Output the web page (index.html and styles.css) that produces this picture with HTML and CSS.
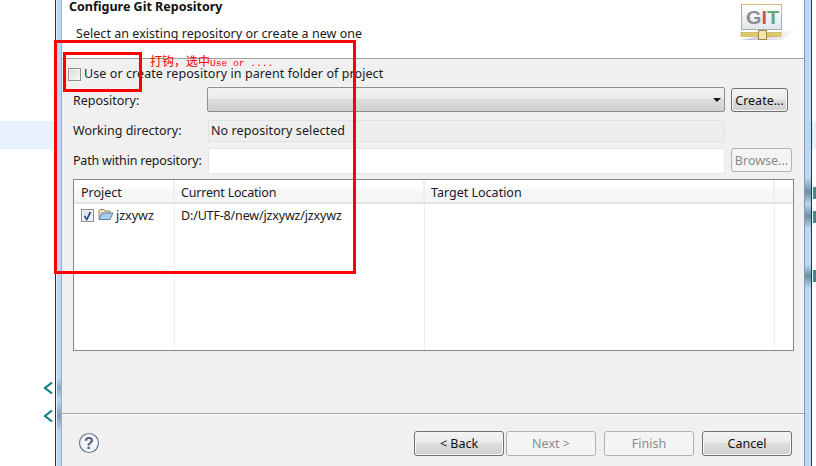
FILE: index.html
```html
<!DOCTYPE html>
<html lang="en">
<head>
<meta charset="utf-8">
<title>Configure Git Repository</title>
<link rel="stylesheet" href="styles.css">
</head>
<body>
<div class="desk">
  <div class="gutter-left">
    <div class="row-highlight"></div>
    <div class="carets">
      <svg class="caret" width="10" height="14" viewBox="0 0 10 14"><path d="M9 1.500 2 7l7 5.500" fill="none" stroke="#0c8080" stroke-width="2.200"/></svg>
      <svg class="caret" width="10" height="14" viewBox="0 0 10 14"><path d="M9 1.500 2 7l7 5.500" fill="none" stroke="#0c8080" stroke-width="2.200"/></svg>
    </div>
  </div>
  <div class="frame frame-left"></div>
  <main class="dialog">
    <header class="banner">
      <div class="banner-text">
        <h1 class="title">Configure Git Repository</h1>
        <p class="subtitle">Select an existing repository or create a new one</p>
      </div>
      <svg class="git-logo" width="58" height="42" viewBox="0 0 58 42">
        <defs>
          <linearGradient id="panel" x1="0" y1="0" x2="0" y2="1"><stop offset="0" stop-color="#ffffff"/><stop offset="1" stop-color="#dfe6ec"/></linearGradient>
          <linearGradient id="shadow" x1="0" y1="0" x2="1" y2="0"><stop offset="0" stop-color="#c4bdd0"/><stop offset="1" stop-color="#ffffff"/></linearGradient>
        </defs>
        <path d="M1 40 L42 40 L58 28 L40 33Z" fill="url(#shadow)"/>
        <rect x="1.500" y="4.500" width="40" height="25" fill="url(#panel)" stroke="#a3b0aa"/>
        <path d="M1 4.500h41M41.500 4v10" stroke="#d9b878"/>
        <text class="git-text" x="6" y="24" textLength="33" lengthAdjust="spacingAndGlyphs"><tspan fill="#8d8d8d">G</tspan><tspan fill="#c0595a">I</tspan><tspan fill="#66a878">T</tspan></text>
        <rect x="1" y="32.500" width="40" height="4" fill="#dccb68" stroke="#b9a84c" stroke-width=".6"/>
        <rect x="18.500" y="30.500" width="8" height="9" fill="#f3e7b4" stroke="#a08a42"/>
      </svg>
    </header>
    <section class="body">
      <label class="check-row"><span class="checkbox"></span><span>Use or create repository in parent folder of project</span></label>
      <div class="form">
        <span class="label">Repository:</span>
        <div class="combo"><span class="combo-arrow"></span></div>
        <button class="btn btn-create">Create...</button>
        <span class="label">Working directory:</span>
        <div class="field readonly">No repository selected</div>
        <span></span>
        <span class="label label-path">Path within repository:</span>
        <div class="field editable"></div>
        <button class="btn btn-browse" disabled>Browse...</button>
      </div>
      <div class="table">
        <div class="thead">
          <div class="th col-project">Project</div>
          <div class="th col-current">Current Location</div>
          <div class="th col-target">Target Location</div>
          <div class="th col-rest"></div>
        </div>
        <div class="tbody">
          <div class="td col-project">
            <span class="checkbox checked">
              <svg width="9" height="10" viewBox="0 0 9 10"><path d="M1.500 5 3.800 8.500 7.500 1" fill="none" stroke="#2d4f9e" stroke-width="1.700"/></svg>
            </span>
            <svg class="folder" width="16" height="13" viewBox="0 0 16 13"><path d="M1 11V2.500L2 1.500h4l1 1.500h5v2" fill="#f2e3b0" stroke="#8b8b70"/><path d="M1 11.500 4 5h11l-3 6.500z" fill="#a9cdf0" stroke="#5a7fae"/></svg>
            <span>jzxywz</span>
          </div>
          <div class="td col-current">D:/UTF-8/new/jzxywz/jzxywz</div>
          <div class="td col-target"></div>
          <div class="td col-rest"></div>
        </div>
      </div>
    </section>
    <footer class="footer">
      <svg class="help" width="22" height="22" viewBox="0 0 22 22"><circle cx="11" cy="11" r="9.500" fill="#f4f5f8" stroke="#68789a" stroke-width="1.200"/><text class="help-mark" x="11" y="16.500" text-anchor="middle">?</text></svg>
      <div class="nav">
        <button class="btn btn-nav">&lt; Back</button>
        <button class="btn btn-nav" disabled>Next &gt;</button>
        <button class="btn btn-nav btn-finish" disabled>Finish</button>
        <button class="btn btn-nav btn-cancel">Cancel</button>
      </div>
    </footer>
  </main>
  <div class="frame frame-right"></div>
  <div class="gutter-right">
    <div class="row-highlight"></div>
    <span class="tick tick-a"></span>
    <span class="tick tick-b"></span>
    <span class="tick tick-c"></span>
  </div>
  <div class="mark mark-large"></div>
  <div class="mark mark-small"></div>
  <div class="note">打钩，选中<span class="note-latin">Use or ....</span></div>
</div>
</body>
</html>
```
FILE: styles.css
```css
* { box-sizing: border-box; }
html, body { margin: 0; padding: 0; }
body {
  width: 816px;
  height: 466px;
  overflow: hidden;
  background: #fff;
  font-family: "Noto Sans", "Open Sans", sans-serif;
  font-size: 12.500px;
  color: #1a1a1a;
}
.desk { position: relative; display: flex; width: 816px; height: 466px; }
.gutter-left { width: 55px; flex: none; position: relative; }
.gutter-right { width: 4px; flex: none; position: relative; }
.row-highlight { position: absolute; left: 0; right: 0; top: 121px; height: 28px; background: #e8f2fe; }
.carets { position: absolute; left: 43px; top: 381px; display: flex; flex-direction: column; gap: 14px; }
.caret { display: block; }
.tick { position: absolute; left: 1px; width: 3px; height: 12px; background: #3f8a8c; }
.tick-a { top: 187px; }
.tick-b { top: 211px; }
.tick-c { top: 270px; }
.frame { flex: none; background: #b9d7f6; }
.frame-left {
  width: 7px;
  border-left: 1px solid #2a3440;
  border-right: 1px solid #a9adb2;
  box-shadow: inset 1px 0 0 #e8eef4;
  background: linear-gradient(to bottom, #b9d7f6 0, #b9d7f6 378px, #86a8c4 388px, #b9d7f6 400px, #7f9fb8 416px, #b9d7f6 432px);
}
.frame-right {
  width: 8px;
  border-left: 1px solid #8a97a6;
  border-right: 1px solid #2a3440;
  background: linear-gradient(to bottom, #b9d7f6 0, #b9d7f6 178px, #6c8ca6 192px, #b9d7f6 204px, #6c8ca6 216px, #b9d7f6 228px, #b9d7f6 265px, #6c8ca6 276px, #b9d7f6 288px);
}
.dialog { flex: 1; min-width: 0; display: flex; flex-direction: column; background: #f0f0f0; }
.banner {
  height: 59px;
  flex: none;
  background: #fff;
  border-bottom: 1px solid #a0a0a0;
  display: flex;
  justify-content: space-between;
  padding: 0 0 0 7px;
}
.title { margin: 0; font-size: 12.500px; font-weight: 700; line-height: 13px; color: #111; }
.subtitle { margin: 13px 0 0 7px; line-height: 16px; letter-spacing: .04px; }
.git-logo { margin: 0 6px 0 0; }
.git-text { font-family: "Liberation Sans", sans-serif; font-size: 19px; font-weight: 700; }
.body { flex: 1; min-height: 0; padding: 6px 10px 0 11px; }
.check-row { display: flex; align-items: center; gap: 3px; height: 18px; margin-left: -5px; letter-spacing: .08px; line-height: 14px; }
.checkbox {
  width: 13px; height: 13px; flex: none;
  border: 1px solid #8e8f8f;
  background: linear-gradient(135deg, #dcdcdc, #f4f4f4);
  box-shadow: inset 0 0 0 1px #f4f4f4;
  display: inline-flex; align-items: center; justify-content: center;
}
.form {
  display: grid;
  grid-template-columns: 134px 518px 1fr;
  grid-template-rows: 24px 30px 32px;
  align-items: end;
  margin-top: 5px;
}
.label { white-space: nowrap; height: 22px; line-height: 22px; }
.label-path { height: 26px; line-height: 26px; letter-spacing: -.19px; }
.combo {
  height: 25px;
  border: 1px solid #8e8e8e;
  border-radius: 2px;
  background: linear-gradient(to bottom, #f2f2f2 0, #ebebeb 45%, #dddddd 50%, #cfcfcf 100%);
  display: flex; align-items: center; justify-content: flex-end;
  padding-right: 3px;
}
.combo-arrow { width: 0; height: 0; border-left: 4px solid transparent; border-right: 4px solid transparent; border-top: 4px solid #111; }
.field { margin-left: 1px; padding: 0 2px 2px; display: flex; align-items: center; border-radius: 2px; }
.readonly { height: 22px; background: #eeeeee; border: 1px solid #e2e2e2; letter-spacing: .09px; }
.editable { height: 26px; background: #fff; border: 1px solid #e6e6e6; }
.btn {
  font: inherit;
  color: #111;
  height: 25px;
  padding: 0;
  border: 1px solid #707070;
  border-radius: 3px;
  background: linear-gradient(to bottom, #f2f2f2 0, #ebebeb 45%, #dddddd 50%, #cfcfcf 100%);
  box-shadow: inset 0 0 0 1px #f6f6f6;
}
.btn:disabled { color: #8a8a8a; border-color: #adb2b5; background: #f4f4f4; box-shadow: none; }
.btn-create { width: 57px; height: 24px; margin-left: 6px; }
.btn-browse { width: 61px; margin-left: 6px; align-self: start; margin-top: 6px; height: 24px; }
.table { margin-top: 5px; height: 172px; width: 721px; border: 1px solid #828790; background: #fff; }
.thead { display: flex; height: 24px; background: linear-gradient(to bottom, #fff 0, #fff 8px, #f6f7f9 10px, #f4f5f7 100%); border-bottom: 2px solid #e3e4e6; }
.tbody { display: flex; height: 146px; }
.th { padding: 4px 0 0 7px; border-right: 2px solid #eceef1; line-height: 18px; }
.td { padding: 3px 0 0 7px; border-right: 1px solid #e4effb; line-height: 18px; }
.th.col-current, .td.col-current, .th.col-target { padding-left: 6px; }
.th.col-current { letter-spacing: -.2px; }
.td.col-current { letter-spacing: -.16px; }
.col-project { width: 101px; }
.col-current { width: 250px; }
.col-target { width: 350px; }
.col-rest { flex: 1; border-right: 0; }
.tbody .col-project { display: flex; align-items: flex-start; gap: 4px; }
.tbody .col-project .checkbox { margin-top: 2px; }
.folder { margin-top: 1px; margin-right: -2px; }
.footer {
  height: 53px;
  flex: none;
  border-top: 1px solid #a0a0a0;
  display: flex;
  align-items: flex-start;
  justify-content: space-between;
  padding: 17px 12px 0 16px;
  box-shadow: inset 0 1px 0 #fff;
}
.help { margin-top: 1px; }
.help-mark { font-family: "Liberation Sans", sans-serif; font-size: 16px; font-weight: 700; fill: #52607f; }
.nav { display: flex; }
.btn-nav { width: 90px; margin-left: 2px; }
.btn-finish, .btn-cancel { margin-left: 8px; }
.mark { position: absolute; border: 3px solid #f00; pointer-events: none; }
.mark-large { left: 54px; top: 40px; width: 302px; height: 234px; }
.mark-small { left: 63px; top: 52px; width: 79px; height: 40px; }
.note {
  position: absolute; left: 150px; top: 55px;
  color: #f00; font-family: "Noto Sans CJK SC", sans-serif; font-size: 12px; line-height: 12px; white-space: nowrap;
}
.note-latin { font-family: "Liberation Mono", monospace; font-size: 9.600px; }
```
